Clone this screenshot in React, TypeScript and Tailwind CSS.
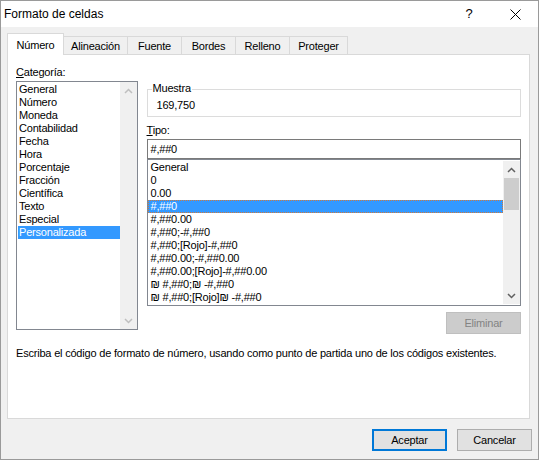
import React from 'react';

const categories = [
  'General',
  'Número',
  'Moneda',
  'Contabilidad',
  'Fecha',
  'Hora',
  'Porcentaje',
  'Fracción',
  'Científica',
  'Texto',
  'Especial',
  'Personalizada',
];

const formats = [
  'General',
  '0',
  '0.00',
  '#,##0',
  '#,##0.00',
  '#,##0;-#,##0',
  '#,##0;[Rojo]-#,##0',
  '#,##0.00;-#,##0.00',
  '#,##0.00;[Rojo]-#,##0.00',
  '₪ #,##0;₪ -#,##0',
  '₪ #,##0;[Rojo]₪ -#,##0',
];

const tabs = [
  { label: 'Número', w: 'w-[57px]' },
  { label: 'Alineación', w: 'w-[65px]' },
  { label: 'Fuente', w: 'w-[55px]' },
  { label: 'Bordes', w: 'w-[55px]' },
  { label: 'Relleno', w: 'w-[55px]' },
  { label: 'Proteger', w: 'w-[59px]' },
];

const Chevron: React.FC<{ up?: boolean; disabled?: boolean }> = ({ up, disabled }) => (
  <svg width="9" height="6" viewBox="0 0 9 6" className={up ? '' : 'rotate-180'}>
    <path
      d="M1 5 L4.5 1.5 L8 5"
      fill="none"
      stroke={disabled ? '#bfbfbf' : '#606060'}
      strokeWidth="1.5"
    />
  </svg>
);

const ScrollBar: React.FC<{ disabled?: boolean }> = ({ disabled }) => (
  <div className="w-[17px] h-full bg-[#f0f0f0] flex flex-col">
    <div className="h-[17px] flex items-center justify-center">
      <Chevron up disabled={disabled} />
    </div>
    <div className="flex-1 px-[1px]">
      {!disabled && <div className="h-[32px] bg-[#cdcdcd]" />}
    </div>
    <div className="h-[17px] flex items-center justify-center">
      <Chevron disabled={disabled} />
    </div>
  </div>
);

export default function App() {
  return (
    <div className="w-[539px] h-[460px] border border-[#9a9a9a] bg-[#f0f0f0] flex flex-col text-[11px] tracking-[-0.2px] text-black font-['Liberation_Sans',Arial,sans-serif] select-none">
      {/* title bar */}
      <div className="h-[26px] bg-white flex items-center text-[12px] tracking-normal">
        <span className="pl-[3px] flex-1">Formato de celdas</span>
        <div className="w-[46px] h-full flex items-center justify-center text-[13px]">?</div>
        <div className="w-[46px] h-full flex items-center justify-center">
          <svg width="11" height="11" viewBox="0 0 11 11">
            <path d="M0.5 0.5 L10.5 10.5 M10.5 0.5 L0.5 10.5" stroke="#000" strokeWidth="1" />
          </svg>
        </div>
      </div>

      <div className="flex-1 flex flex-col pt-[6px] pl-[6px] pr-[6px]">
        {/* tabs */}
        <div className="h-[21px] flex items-end">
          {tabs.map((t, i) =>
            i === 0 ? (
              <div
                key={t.label}
                className={`${t.w} h-[22px] -mb-[1px] relative z-10 bg-white border border-b-0 border-[#d9d9d9] flex items-center justify-center pt-[2px]`}
              >
                {t.label}
              </div>
            ) : (
              <div
                key={t.label}
                className={`${t.w} h-[18px] -ml-[1px] border border-b-0 border-[#d9d9d9] flex items-center justify-center pt-[1px]`}
              >
                {t.label}
              </div>
            )
          )}
        </div>

        {/* panel */}
        <div className="w-[523px] h-[365px] bg-white border border-[#d9d9d9] px-[8px] flex flex-col">
          <div className="flex gap-[9px] items-start">
            {/* category */}
            <div className="w-[122px] pt-[9px] flex flex-col">
              <div className="leading-[16px]">
                <span className="underline">C</span>ategoría:
              </div>
              <div className="mt-[1px] h-[249px] border border-[#828790] flex">
                <div className="flex-1 pt-[1px]">
                  {categories.map((c) => (
                    <div
                      key={c}
                      className={`ml-[1px] pl-[1px] h-[13px] leading-[13px] whitespace-nowrap ${
                        c === 'Personalizada' ? 'bg-[#3399ff] text-white' : ''
                      }`}
                    >
                      {c}
                    </div>
                  ))}
                </div>
                <ScrollBar disabled />
              </div>
            </div>

            {/* right column */}
            <div className="w-[376px] pt-[34px] flex flex-col">
              <div className="relative h-[28px] border border-[#dcdcdc] pl-[9px] pt-[7px] leading-[16px]">
                <span className="absolute left-[4px] -top-[10px] bg-white px-[1px] leading-[16px]">Muestra</span>
                169,750
              </div>

              <div className="mt-[5px] leading-[16px]">
                <span className="underline">T</span>ipo:
              </div>
              <div className="mt-[1px] h-[20px] border border-[#7a7a7a] pl-[3px] flex items-center">#,##0</div>

              <div className="h-[147px] border border-[#828790] flex overflow-hidden">
                <div className="flex-1 pt-[1px] overflow-hidden">
                  {formats.map((f) => (
                    <div
                      key={f}
                      className={`h-[13px] leading-[13px] pl-[3px] whitespace-nowrap ${
                        f === '#,##0'
                          ? 'bg-[#3399ff] text-white outline-1 outline-dotted outline-[#d0793a] -outline-offset-1'
                          : ''
                      }`}
                    >
                      {f}
                    </div>
                  ))}
                </div>
                <div className="h-[144px] pt-[1px]">
                  <ScrollBar />
                </div>
              </div>

              <div className="mt-[6px] flex justify-end">
                <div className="w-[75px] h-[22px] bg-[#cccccc] border border-[#bfbfbf] text-[#838383] flex items-center justify-center">
                  Eliminar
                </div>
              </div>
            </div>
          </div>

          <div className="mt-[11px] leading-[16px] whitespace-nowrap">
            Escriba el código de formato de número, usando como punto de partida uno de los códigos existentes.
          </div>
        </div>

        {/* buttons */}
        <div className="mt-[10px] flex justify-end gap-[10px]">
          <div className="w-[75px] h-[22px] bg-[#e1e1e1] border-2 border-[#0078d7] flex items-center justify-center">
            Aceptar
          </div>
          <div className="w-[75px] h-[22px] bg-[#e1e1e1] border border-[#adadad] flex items-center justify-center">
            Cancelar
          </div>
        </div>
      </div>
    </div>
  );
}
